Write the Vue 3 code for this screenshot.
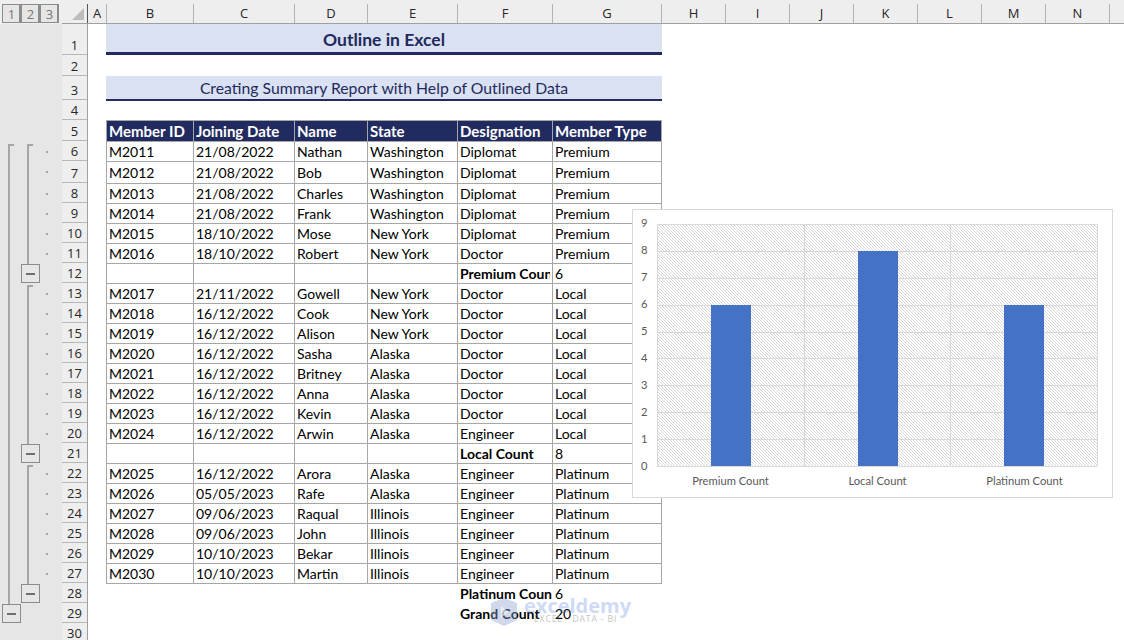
<script setup>
const levels = [1, 2, 3];
const columns = [
  { name: 'A', width: 19 }, { name: 'B', width: 87 }, { name: 'C', width: 101 },
  { name: 'D', width: 73 }, { name: 'E', width: 90 }, { name: 'F', width: 95 },
  { name: 'G', width: 109 }, { name: 'H', width: 64 }, { name: 'I', width: 64 },
  { name: 'J', width: 64 }, { name: 'K', width: 64 }, { name: 'L', width: 64 },
  { name: 'M', width: 64 }, { name: 'N', width: 64 },
];

const rowHeights = [31, 21, 24, 20, 21, 20, 22, 20];
while (rowHeights.length < 30) rowHeights.push(20);

const heads = ['Member ID', 'Joining Date', 'Name', 'State', 'Designation', 'Member Type'];

// 표 데이터
const members = [
  ['M2011', '21/08/2022', 'Nathan', 'Washington', 'Diplomat', 'Premium'],
  ['M2012', '21/08/2022', 'Bob', 'Washington', 'Diplomat', 'Premium'],
  ['M2013', '21/08/2022', 'Charles', 'Washington', 'Diplomat', 'Premium'],
  ['M2014', '21/08/2022', 'Frank', 'Washington', 'Diplomat', 'Premium'],
  ['M2015', '18/10/2022', 'Mose', 'New York', 'Diplomat', 'Premium'],
  ['M2016', '18/10/2022', 'Robert', 'New York', 'Doctor', 'Premium'],
  ['', '', '', '', 'Premium Count', '6'],
  ['M2017', '21/11/2022', 'Gowell', 'New York', 'Doctor', 'Local'],
  ['M2018', '16/12/2022', 'Cook', 'New York', 'Doctor', 'Local'],
  ['M2019', '16/12/2022', 'Alison', 'New York', 'Doctor', 'Local'],
  ['M2020', '16/12/2022', 'Sasha', 'Alaska', 'Doctor', 'Local'],
  ['M2021', '16/12/2022', 'Britney', 'Alaska', 'Doctor', 'Local'],
  ['M2022', '16/12/2022', 'Anna', 'Alaska', 'Doctor', 'Local'],
  ['M2023', '16/12/2022', 'Kevin', 'Alaska', 'Doctor', 'Local'],
  ['M2024', '16/12/2022', 'Arwin', 'Alaska', 'Engineer', 'Local'],
  ['', '', '', '', 'Local Count', '8'],
  ['M2025', '16/12/2022', 'Arora', 'Alaska', 'Engineer', 'Platinum'],
  ['M2026', '05/05/2023', 'Rafe', 'Alaska', 'Engineer', 'Platinum'],
  ['M2027', '09/06/2023', 'Raqual', 'Illinois', 'Engineer', 'Platinum'],
  ['M2028', '09/06/2023', 'John', 'Illinois', 'Engineer', 'Platinum'],
  ['M2029', '10/10/2023', 'Bekar', 'Illinois', 'Engineer', 'Platinum'],
  ['M2030', '10/10/2023', 'Martin', 'Illinois', 'Engineer', 'Platinum'],
];

const tableRows = rowHeights.slice(5, 27);

// 점 위치 (행 중앙)
const rowTop = (n) => 24 + rowHeights.slice(0, n - 1).reduce((a, b) => a + b, 0);
const dotRows = [];
for (let n = 6; n <= 27; n++) {
  if (n !== 12 && n !== 21) dotRows.push(n);
}
const minusBoxes = [
  { x: 21, y: rowTop(12) + 1 },
  { x: 21, y: rowTop(21) + 1 },
  { x: 21, y: rowTop(28) + 1 },
  { x: 2, y: rowTop(29) + 1 },
];

const ticks = [9, 8, 7, 6, 5, 4, 3, 2, 1, 0];
const bars = [
  { label: 'Premium Count', value: 6 },
  { label: 'Local Count', value: 8 },
  { label: 'Platinum Count', value: 6 },
];
const unit = 242 / 9;
</script>

<template>
  <div class="excel">
    <aside class="outline">
      <div class="levels">
        <button v-for="l in levels" :key="l" class="level">{{ l }}</button>
      </div>
      <svg class="brackets" width="62" height="640" viewBox="0 0 62 640">
        <g fill="none" stroke="#a6a6a6" stroke-width="2">
          <path d="M14 145H9V604" />
          <path d="M33 145H28V264" />
          <path d="M33 286H28V444" />
          <path d="M33 466H28V584" />
        </g>
        <rect v-for="n in dotRows" :key="n" x="46" :y="rowTop(n) + 10" width="2" height="2" fill="#a6a6a6" />
        <g v-for="(b, i) in minusBoxes" :key="i">
          <rect :x="b.x + 0.5" :y="b.y + 0.5" width="18" height="18" fill="#e6e6e6" stroke="#8c8c8c" />
          <rect :x="b.x + 5" :y="b.y + 9" width="9" height="2" fill="#6e6e6e" />
        </g>
      </svg>
    </aside>

    <main class="sheet">
      <div class="col-heads">
        <div class="corner"><span class="corner-mark"></span></div>
        <div v-for="c in columns" :key="c.name" class="col-head" :style="{ width: c.width + 'px' }">{{ c.name }}</div>
        <div class="col-rest"></div>
      </div>

      <div class="body">
        <div class="row-heads">
          <div v-for="(h, i) in rowHeights" :key="i" class="row-head" :style="{ height: h + 'px' }">{{ i + 1 }}</div>
        </div>

        <div class="cells">
          <h1 class="title">Outline in Excel</h1>
          <h2 class="subtitle">Creating Summary Report with Help of Outlined Data</h2>

          <table class="members">
            <colgroup>
              <col v-for="c in columns.slice(1, 7)" :key="c.name" :style="{ width: c.width + 'px' }" />
            </colgroup>
            <thead>
              <tr><th v-for="h in heads" :key="h">{{ h }}</th></tr>
            </thead>
            <tbody>
              <tr v-for="(row, r) in members" :key="r" :style="{ height: tableRows[r] + 'px' }">
                <td v-for="(cell, c) in row" :key="c" :class="{ strong: c === 4 && !row[0] }">
                  <div class="clip">{{ cell }}</div>
                </td>
              </tr>
            </tbody>
          </table>

          <div class="totals">
            <div class="total"><b>Platinum Count</b><span>6</span></div>
            <div class="total"><b>Grand Count</b><span>20</span></div>
          </div>

          <div class="watermark">
            <svg width="28" height="28" viewBox="0 0 28 28">
              <path d="M14 0 27 5v17l-13 6-13-6V5z" fill="#8ea5d0" opacity=".42" />
              <path d="M11 8l7 6-7 6z" fill="#fff" opacity=".6" />
            </svg>
            <div class="wm-text">
              <span class="wm-name">exceldemy</span>
              <span class="wm-sub">EXCEL - DATA - BI</span>
            </div>
          </div>

          <section class="chart">
            <div class="y-axis">
              <span v-for="t in ticks" :key="t">{{ t }}</span>
            </div>
            <div class="plot-wrap">
              <div class="plot">
                <svg class="hatch" width="100%" height="100%">
                  <defs>
                    <pattern id="hatch" width="3" height="3" patternUnits="userSpaceOnUse">
                      <path d="M0 0 3 3M-1 2 1 4M2 -1 4 1" stroke="#d9d9d9" stroke-width="1" shape-rendering="crispEdges" />
                    </pattern>
                  </defs>
                  <rect width="100%" height="100%" fill="url(#hatch)" />
                </svg>
                <div class="h-grid">
                  <i v-for="t in 9" :key="t"></i>
                </div>
                <div class="v-grid">
                  <div v-for="b in bars" :key="b.label" class="slot">
                    <div class="bar" :style="{ height: b.value * unit + 'px' }"></div>
                  </div>
                </div>
              </div>
              <div class="x-axis">
                <span v-for="b in bars" :key="b.label">{{ b.label }}</span>
              </div>
            </div>
          </section>
        </div>
      </div>
    </main>
  </div>
</template>

<style>
html, body {
  margin: 0;
  overflow: hidden;
  background: #fff;
}
</style>

<style scoped>
.excel {
  display: flex;
  width: 1124px;
  height: 640px;
  overflow: hidden;
  font-family: Lato, "Liberation Sans", sans-serif;
  font-size: 14px;
  color: #000;
}

.outline {
  position: relative;
  width: 62px;
  height: 640px;
  flex: none;
  background: #e6e6e6;
}

.levels {
  display: flex;
  gap: 0;
  height: 24px;
  padding: 4px 0 0 2px;
  box-sizing: border-box;
  background: #efefef;
}

.level {
  width: 19px;
  height: 19px;
  padding: 0;
  border: 1px solid #8c8c8c;
  box-shadow: inset -1px 0 0 #8c8c8c;
  background: #e6e6e6;
  color: #777;
  font: 13px "Open Sans", sans-serif;
}

.brackets {
  position: absolute;
  left: 0;
  top: 0;
}

.sheet {
  flex: 1;
  min-width: 0;
}

.col-heads {
  display: flex;
  height: 24px;
  box-sizing: border-box;
  padding-top: 4px;
  border-bottom: 1px solid #a0a0a0;
  background: #eee;
}

.corner {
  position: relative;
  width: 26px;
  flex: none;
  box-sizing: border-box;
  border-right: 1px solid #555;
}

.corner-mark {
  position: absolute;
  right: 3px;
  bottom: 3px;
  width: 0;
  height: 0;
  border-left: 12px solid transparent;
  border-bottom: 12px solid #bdbdbd;
}

.col-head {
  flex: none;
  box-sizing: border-box;
  border-right: 1px solid #b4b4b4;
  text-align: center;
  font: 13px/19px "Open Sans", sans-serif;
  color: #262626;
}

.col-rest {
  flex: 1;
}

.body {
  display: flex;
}

.row-heads {
  width: 26px;
  flex: none;
  background: #eee;
  box-sizing: border-box;
  border-right: 1px solid #a0a0a0;
}

.row-head {
  box-sizing: border-box;
  display: flex;
  align-items: flex-end;
  justify-content: center;
  border-bottom: 1px solid #b8b8b8;
  font: 13px/17px "Open Sans", sans-serif;
  color: #262626;
}

.cells {
  position: relative;
  padding-left: 18px;
  flex: 1;
  min-width: 0;
}

.title,
.subtitle {
  width: 556px;
  margin: 0;
  box-sizing: border-box;
  background: #d9e1f2;
  color: #1f2a5c;
  text-align: center;
}

.title {
  height: 31px;
  border-bottom: 3px solid #222b5f;
  font-size: 17.5px;
  line-height: 31px;
  font-weight: 700;
}

.subtitle {
  height: 25px;
  margin-top: 21px;
  border-bottom: 2px solid #222b5f;
  font-size: 15.75px;
  line-height: 24px;
  font-weight: 400;
}

.members {
  margin-top: 19px;
  width: 555px;
  table-layout: fixed;
  border-collapse: collapse;
}

.members th {
  height: 21px;
  padding: 0 2px;
  box-sizing: border-box;
  border: 1px solid #a6a6a6;
  background: #222b5f;
  color: #fff;
  text-align: left;
  font-size: 15px;
  font-weight: 700;
  white-space: nowrap;
  overflow: hidden;
}

.members td {
  padding: 0 2px;
  border: 1px solid #a6a6a6;
  font-size: 14px;
  line-height: 18px;
  white-space: nowrap;
  overflow: hidden;
}

.members td.strong {
  font-weight: 700;
}

.clip {
  overflow: hidden;
}

.totals {
  width: 555px;
  padding-left: 351px;
  box-sizing: border-box;
}

.total {
  display: flex;
  height: 20px;
  align-items: center;
  line-height: 20px;
}

.total b {
  width: 95px;
  padding-left: 3px;
  box-sizing: border-box;
  overflow: hidden;
  white-space: nowrap;
}

.total span {
  padding-left: 3px;
}

.watermark {
  position: absolute;
  left: 402px;
  top: 574px;
  display: flex;
  gap: 6px;
  align-items: flex-start;
  pointer-events: none;
}

.wm-text {
  display: flex;
  flex-direction: column;
  margin-top: -2px;
}

.wm-name {
  font: 700 20px/19px "Open Sans", sans-serif;
  color: #3f6fd8;
  opacity: .25;
}

.wm-sub {
  margin-top: -1px;
  padding-left: 10px;
  font: 400 8.5px/10px "Open Sans", sans-serif;
  letter-spacing: .9px;
  white-space: nowrap;
  color: #888;
  opacity: .5;
}

.chart {
  position: absolute;
  left: 544px;
  top: 185px;
  display: flex;
  width: 481px;
  height: 289px;
  box-sizing: border-box;
  padding: 14px 14px 0 8px;
  border: 1px solid #d9d9d9;
  background: #fff;
}

.y-axis {
  width: 16px;
  height: 255px;
  margin-top: -7px;
  display: flex;
  flex-direction: column;
  justify-content: space-between;
  font: 11.2px/12px Lato, sans-serif;
  color: #595959;
}

.plot-wrap {
  flex: 1;
  min-width: 0;
}

.plot {
  position: relative;
  height: 243px;
  box-sizing: border-box;
  border-left: 1px solid #d9d9d9;
  border-bottom: 1px solid #d9d9d9;
}

.hatch {
  position: absolute;
  inset: 0;
}

.h-grid {
  position: absolute;
  inset: 0;
  display: flex;
  flex-direction: column;
}

.h-grid i {
  flex: 1;
  border-top: 1px solid #d9d9d9;
}

.v-grid {
  position: absolute;
  inset: 0;
  display: flex;
}

.slot {
  flex: 1;
  display: flex;
  align-items: flex-end;
  justify-content: center;
  border-right: 1px solid #d9d9d9;
}

.bar {
  width: 40px;
  background: #4472c4;
}

.x-axis {
  display: flex;
  margin-top: 7px;
  font: 11.2px/14px Lato, sans-serif;
  color: #595959;
}

.x-axis span {
  flex: 1;
  text-align: center;
}
</style>
